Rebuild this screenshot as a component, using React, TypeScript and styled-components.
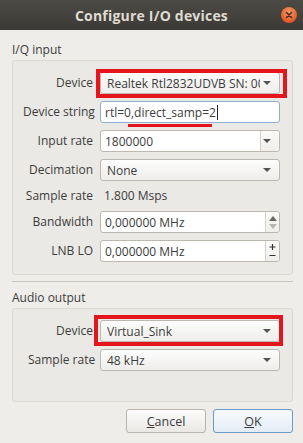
import React from 'react'
import styled, { createGlobalStyle, css } from 'styled-components'

const GlobalStyle = createGlobalStyle`
  html, body {
    margin: 0;
    padding: 0;
    background: #efedea;
  }
  body {
    font-family: 'Open Sans', 'Liberation Sans', sans-serif;
    font-size: 12px;
    color: #3c3c3c;
  }
`

const Window = styled.div`
  width: 303px;
  height: 443px;
  display: flex;
  flex-direction: column;
  background: #efedea;
  overflow: hidden;
`

const TitleBar = styled.div`
  height: 30px;
  flex: none;
  display: flex;
  align-items: center;
  justify-content: center;
  position: relative;
  background: linear-gradient(#4b4a45, #3b3a36);
  color: #dfdbd2;
  font-size: 14px;
  font-weight: 700;
  letter-spacing: 0.2px;
`

const CloseButton = styled.span`
  position: absolute;
  right: 6px;
  top: 7px;
  width: 16px;
  height: 16px;
  border-radius: 50%;
  background: radial-gradient(circle at 50% 35%, #f39a6c, #e25a26 70%, #c8461a);
  display: flex;
  align-items: center;
  justify-content: center;
`

const Body = styled.div`
  flex: 1;
  display: flex;
  flex-direction: column;
  padding: 12px 10px 0 12px;
`

const SectionTitle = styled.div`
  height: 16px;
  line-height: 16px;
  margin-bottom: 2px;
`

const GroupBox = styled.div<{ $pb: number; $label: number }>`
  display: grid;
  grid-template-columns: ${(p) => p.$label}px minmax(0, 1fr);
  column-gap: 7px;
  row-gap: 7px;
  align-items: center;
  padding: 11px 12px ${(p) => p.$pb}px ${(p) => 80 - p.$label}px;
  border: 1px solid #dcd8d2;
  border-radius: 3px;
  background: #ebe9e5;
`

const Label = styled.div`
  text-align: right;
  white-space: nowrap;
  line-height: 16px;
`

const Separator = styled.div`
  height: 1px;
  background: #c9c5bf;
  margin: 6px 0 8px;
`

const fieldBase = css`
  height: 22px;
  min-width: 0;
  box-sizing: border-box;
  border-radius: 3px;
  display: flex;
  align-items: center;
  position: relative;
  white-space: nowrap;
`

const Combo = styled.div<{ $mark?: [number, number, number, number] }>`
  ${fieldBase};
  border: 1px solid #bcb7b0;
  background: linear-gradient(#fdfdfd, #eeedeb);
  padding: 0 19px 0 6px;
  ${(p) =>
    p.$mark &&
    css`
      &::after {
        content: '';
        position: absolute;
        left: ${-p.$mark[0]}px;
        top: ${-p.$mark[1]}px;
        right: ${-p.$mark[2]}px;
        bottom: ${-p.$mark[3]}px;
        border: 4px solid #e4161b;
        pointer-events: none;
      }
    `}
`

const ComboText = styled.span`
  overflow: hidden;
  min-width: 0;
  flex: 1;
`

const Arrow = styled.span`
  position: absolute;
  right: 8px;
  top: 50%;
  margin-top: -2px;
  width: 0;
  height: 0;
  border-left: 4px solid transparent;
  border-right: 4px solid transparent;
  border-top: 4px solid #555450;
`

const EditField = styled.div<{ $focus?: boolean }>`
  ${fieldBase};
  border: 1px solid ${(p) => (p.$focus ? '#8eaed0' : '#bcb7b0')};
  background: #ffffff;
  padding: 0 6px 0 4px;
`

const Caret = styled.span`
  display: inline-block;
  width: 1px;
  height: 15px;
  background: #222;
  margin-left: 1px;
`

const Underline = styled.span`
  position: absolute;
  left: 27px;
  width: 84px;
  bottom: -5px;
  height: 3px;
  background: #e4161b;
`

const SideButton = styled.span`
  position: absolute;
  right: 0;
  top: 0;
  bottom: 0;
  width: 18px;
  border-left: 1px solid #d3cfc9;
  display: flex;
  flex-direction: column;
  align-items: center;
  justify-content: center;
  background: linear-gradient(#fbfbfa, #efeeec);
  border-radius: 0 3px 3px 0;
`

const SpinSide = styled(SideButton)`
  width: 13px;
  gap: 3px;
`

const UpArrow = styled.span<{ $light?: boolean }>`
  width: 0;
  height: 0;
  border-left: 4px solid transparent;
  border-right: 4px solid transparent;
  border-bottom: 5px solid ${(p) => (p.$light ? '#b9b5af' : '#6b6964')};
`

const DownArrow = styled.span<{ $light?: boolean }>`
  width: 0;
  height: 0;
  border-left: 4px solid transparent;
  border-right: 4px solid transparent;
  border-top: 5px solid ${(p) => (p.$light ? '#b9b5af' : '#6b6964')};
`

const ValueText = styled.div`
  line-height: 16px;
  padding-left: 4px;
`

const ButtonRow = styled.div`
  display: flex;
  justify-content: flex-end;
  gap: 7px;
  margin-top: 7px;
`

const Button = styled.div<{ $default?: boolean }>`
  width: 80px;
  height: 24px;
  box-sizing: border-box;
  border-radius: 3px;
  display: flex;
  align-items: center;
  justify-content: center;
  border: 1px solid ${(p) => (p.$default ? '#6d9ac6' : '#b9b4ad')};
  background: ${(p) =>
    p.$default ? 'linear-gradient(#f7fafd, #e3ecf5)' : 'linear-gradient(#fcfcfc, #eae8e5)'};
  color: #3c3c3c;
  font-size: 12.5px;
`

const Mnemonic = styled.span`
  text-decoration: underline;
`

const PlusMinusIcon = () => (
  <svg width="7" height="16" viewBox="0 0 7 16">
    <path d="M0.5 4 H6.5 M3.5 1 V7 M0.5 12.5 H6.5" stroke="#333" strokeWidth="1.2" />
  </svg>
)

export default function App() {
  return (
    <Window>
      <GlobalStyle />
      <TitleBar>
        Configure I/O devices
        <CloseButton>
          <svg width="8" height="8" viewBox="0 0 8 8">
            <path d="M1.5 1.5 L6.5 6.5 M6.5 1.5 L1.5 6.5" stroke="#4a2a1e" strokeWidth="1.5" strokeLinecap="round" />
          </svg>
        </CloseButton>
      </TitleBar>
      <Body>
        <SectionTitle>I/Q input</SectionTitle>
        <GroupBox $pb={12} $label={70}>
          <Label>Device</Label>
          <Combo $mark={[5, 4, 8, 5]}>
            <ComboText>Realtek Rtl2832UDVB SN: 00000001</ComboText>
            <Arrow />
          </Combo>
          <Label>Device string</Label>
          <EditField $focus>
            rtl=0,direct_samp=2
            <Caret />
            <Underline />
          </EditField>
          <Label>Input rate</Label>
          <EditField>
            1800000
            <SideButton>
              <Arrow />
            </SideButton>
          </EditField>
          <Label>Decimation</Label>
          <Combo>
            <ComboText>None</ComboText>
            <Arrow />
          </Combo>
          <Label>Sample rate</Label>
          <ValueText>1.800 Msps</ValueText>
          <Label>Bandwidth</Label>
          <EditField>
            0,000000 MHz
            <SpinSide>
              <UpArrow />
              <DownArrow $light />
            </SpinSide>
          </EditField>
          <Label>LNB LO</Label>
          <EditField>
            0,000000 MHz
            <SpinSide>
              <PlusMinusIcon />
            </SpinSide>
          </EditField>
        </GroupBox>
        <Separator />
        <SectionTitle>Audio output</SectionTitle>
        <GroupBox $pb={30} $label={65}>
          <Label>Device</Label>
          <Combo $mark={[7, 6, 4, 5]}>
            <ComboText>Virtual_Sink</ComboText>
            <Arrow />
          </Combo>
          <Label>Sample rate</Label>
          <Combo>
            <ComboText>48 kHz</ComboText>
            <Arrow />
          </Combo>
        </GroupBox>
        <ButtonRow>
          <Button>
            <span>
              <Mnemonic>C</Mnemonic>ancel
            </span>
          </Button>
          <Button $default>
            <span>
              <Mnemonic>O</Mnemonic>K
            </span>
          </Button>
        </ButtonRow>
      </Body>
    </Window>
  )
}
